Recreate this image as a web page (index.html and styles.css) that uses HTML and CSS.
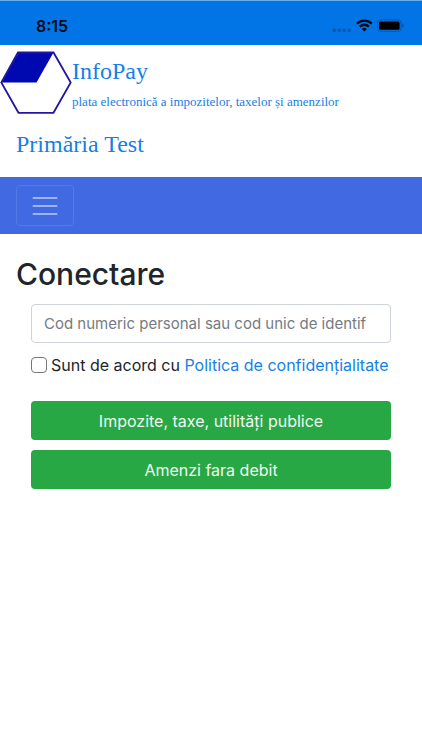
FILE: index.html
```html
<!DOCTYPE html>
<html lang="ro">
<head>
<meta charset="utf-8">
<meta name="viewport" content="width=device-width, initial-scale=1">
<title>InfoPay</title>
<link rel="stylesheet" href="styles.css">
</head>
<body>
<div class="status">
  <span class="time">8:15</span>
  <svg class="status-icons" width="74" height="16" viewBox="0 0 74 16" aria-hidden="true">
    <g fill="#0759b3">
      <rect x="1.5" y="10.5" width="3.4" height="3.4" rx="1"/><rect x="6.5" y="10.5" width="3.4" height="3.4" rx="1"/><rect x="11.5" y="10.5" width="3.4" height="3.4" rx="1"/><rect x="16.5" y="10.5" width="3.4" height="3.4" rx="1"/>
    </g>
    <g fill="none" stroke="#020a14" stroke-width="2.3">
      <path d="M26 5.6a10.6 10.6 0 0 1 14.8 0"/>
      <path d="M28.8 8.6a6.6 6.6 0 0 1 9.2 0"/>
    </g>
    <path d="M30.9 10.9a3.6 3.6 0 0 1 5 0L33.4 13.5z" fill="#020a14"/>
    <rect x="46.5" y="1.9" width="23.6" height="11.4" rx="3" fill="none" stroke="#0753a6"/>
    <rect x="48" y="3.4" width="20.6" height="8.4" rx="1.6" fill="#020202"/>
    <path d="M71.4 5.6q1.6.5 1.6 2t-1.6 2z" fill="#0753a6"/>
  </svg>
</div>
<header class="brand">
  <svg class="logo" width="72" height="64" viewBox="0 0 72 64" aria-hidden="true">
    <path d="M18 1.5h35.5L36.5 31.5H1.3z" fill="#0009b0"/>
    <path d="M18 1.5h35.5L70.7 31.5 53.5 61.8H18.5L1.3 31.5z" fill="none" stroke="#2416a0" stroke-width="1.8"/>
  </svg>
  <a class="brand-text" href="#">
    <span class="name">InfoPay</span>
    <span class="tagline">plata electronică a impozitelor, taxelor și amenzilor</span>
  </a>
</header>
<a class="city" href="#">Primăria Test</a>
<nav class="navbar">
  <button class="toggler" type="button" aria-label="Meniu">
    <svg width="30" height="30" viewBox="0 0 30 30" aria-hidden="true"><path d="M3.5 7h23M3.5 15h23M3.5 23h23" stroke="#a0b4f0" stroke-width="2" stroke-linecap="round"/></svg>
  </button>
</nav>
<main>
  <h1>Conectare</h1>
  <form class="login">
    <input class="code" type="text" aria-label="Cod numeric personal" placeholder="Cod numeric personal sau cod unic de identif">
    <div class="agree">
      <input class="check" type="checkbox" id="agree">
      <label for="agree">Sunt de acord cu <a href="#">Politica de confidențialitate</a></label>
    </div>
    <button class="submit" type="button">Impozite, taxe, utilități publice</button>
    <button class="submit" type="button">Amenzi fara debit</button>
  </form>
</main>
</body>
</html>
```
FILE: styles.css
```css
* {
  box-sizing: border-box;
}

body {
  margin: 0;
  background: #fff;
  color: #212529;
  font: 16px/24px Inter, "Liberation Sans", sans-serif;
}

a {
  color: #1580e8;
  text-decoration: none;
}

.status {
  display: flex;
  align-items: center;
  justify-content: space-between;
  height: 45px;
  padding: 6px 17px 0 36px;
  border-top: 1px solid #66b0f2;
  background: #0275e6;
}

.time {
  color: #020a14;
  font-size: 16px;
  font-weight: 600;
}

.brand {
  display: flex;
  padding-top: 6px;
}

.logo {
  flex: none;
}

.brand-text {
  display: flex;
  flex-direction: column;
  font-family: "Liberation Serif", serif;
}

.name {
  font-size: 24px;
  line-height: 40px;
}

.tagline {
  font-size: 13px;
  line-height: 22px;
}

.city {
  display: block;
  padding: 12px 16px 16px;
  font: 24px/34px "Liberation Serif", serif;
}

.navbar {
  padding: 8px 16px;
  background: #4169e1;
}

.toggler {
  display: flex;
  align-items: center;
  justify-content: center;
  width: 58px;
  height: 41px;
  padding: 0;
  border: 1px solid #5579e5;
  border-radius: 4px;
  background: none;
}

main {
  padding: 20px 16px;
}

h1 {
  margin: 0 0 10px;
  font-size: 30px;
  font-weight: 500;
  line-height: 40px;
}

.login {
  padding: 0 15px;
}

.code {
  display: block;
  width: 100%;
  height: 39px;
  padding: 0 12px;
  border: 1px solid #ced4da;
  border-radius: 4px;
  background: #fff;
  color: #495057;
  font: inherit;
  font-size: 15px;
}

.code::placeholder {
  color: #757b82;
  opacity: 1;
}

.agree {
  display: flex;
  align-items: center;
  gap: 4px;
  margin: 10px 0 24px;
  white-space: nowrap;
}

.check {
  flex: none;
  width: 16px;
  height: 16px;
  margin: 0;
  border: 1px solid #76767a;
  border-radius: 4px;
  background: #fff;
  appearance: none;
}

.check:checked {
  background: #1580e8;
}

.submit {
  display: block;
  width: 100%;
  height: 39px;
  margin-bottom: 10px;
  padding: 0 12px;
  border: 0;
  border-radius: 4px;
  background: #28a745;
  color: #f0faf2;
  font: inherit;
}
```
